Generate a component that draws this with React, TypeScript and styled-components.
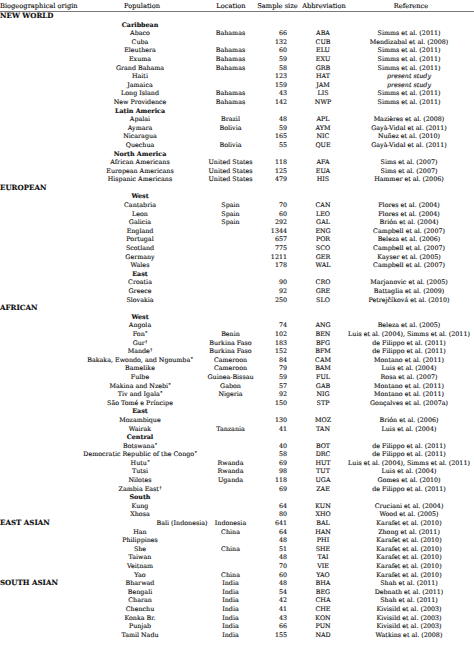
import React from 'react';
import styled, { createGlobalStyle } from 'styled-components';

const Global = createGlobalStyle`
  html, body { margin: 0; padding: 0; background: #fff; }
  body { width: 474px; height: 651px; overflow: hidden; }
`;

const Page = styled.div`
  width: 474px;
  height: 651px;
  overflow: hidden;
  font-family: "DejaVu Serif", "Liberation Serif", serif;
  font-size: 6.35px;
  color: #0d0d0d;
  -webkit-text-stroke: 0.12px #0d0d0d;
`;

const HeaderRow = styled.div`
  display: grid;
  grid-template-columns: 86px 112px 66px 27px 66px 108px;
  height: 11px;
  align-items: center;
  border-bottom: 1.5px solid #7a7a7a;
  font-size: 6.7px;
`;

const Body = styled.div`
  display: flex;
  flex-direction: column;
`;

const Row = styled.div`
  display: grid;
  grid-template-columns: 86px 108px 73px 24px 64px 108px;
  height: 8.6px;
  align-items: center;
  line-height: 8.6px;
`;

type Align = 'left' | 'center' | 'right';

const Cell = styled.div<{ $align?: Align; $bold?: boolean; $italic?: boolean; $shift?: number }>`
  display: flex;
  white-space: nowrap;
  justify-content: ${(p) => (p.$align === 'left' ? 'flex-start' : p.$align === 'right' ? 'flex-end' : 'center')};
  padding-right: ${(p) => (p.$align === 'right' ? '4px' : '0')};
  padding-left: ${(p) => (p.$shift ? `${p.$shift}px` : '0')};
  font-weight: ${(p) => (p.$bold ? 700 : 400)};
  font-style: ${(p) => (p.$italic ? 'italic' : 'normal')};
`;

const Section = styled.div`
  font-weight: 700;
  font-size: 7.1px;
  white-space: nowrap;
`;

const Sup = styled.sup`
  font-size: 4px;
  line-height: 0;
  vertical-align: 2px;
  margin-left: 0.5px;
`;

type Entry = {
  kind: 'entry';
  pop: string;
  mark?: string;
  loc?: string;
  n: string;
  abbr: string;
  ref: string;
  italic?: boolean;
  section?: string;
  shift?: number;
};
type Group = { kind: 'group'; label: string };
type SectionRow = { kind: 'section'; label: string };
type RowData = Entry | Group | SectionRow;

const S = (label: string): SectionRow => ({ kind: 'section', label });
const G = (label: string): Group => ({ kind: 'group', label });
const E = (
  pop: string,
  loc: string,
  n: string,
  abbr: string,
  ref: string,
  extra: Partial<Entry> = {}
): Entry => ({ kind: 'entry', pop, loc, n, abbr, ref, ...extra });

const simms = 'Simms et al. (2011)';
const karafet = 'Karafet et al. (2010)';
const kivisild = 'Kivisild et al. (2003)';
const filippo = 'de Filippo et al. (2011)';
const luisSimms = 'Luis et al. (2004), Simms et al. (2011)';

const rows: RowData[] = [
  S('NEW WORLD'),
  G('Caribbean'),
  E('Abaco', 'Bahamas', '66', 'ABA', simms),
  E('Cuba', '', '132', 'CUB', 'Mendizabal et al. (2008)'),
  E('Eleuthera', 'Bahamas', '60', 'ELU', simms),
  E('Exuma', 'Bahamas', '59', 'EXU', simms),
  E('Grand Bahama', 'Bahamas', '58', 'GRB', simms),
  E('Haiti', '', '123', 'HAT', 'present study', { italic: true }),
  E('Jamaica', '', '159', 'JAM', 'present study', { italic: true }),
  E('Long Island', 'Bahamas', '43', 'LIS', simms),
  E('New Providence', 'Bahamas', '142', 'NWP', simms),
  G('Latin America'),
  E('Apalai', 'Brazil', '48', 'APL', 'Mazières et al. (2008)'),
  E('Aymara', 'Bolivia', '59', 'AYM', 'Gayà-Vidal et al. (2011)'),
  E('Nicaragua', '', '165', 'NIC', 'Nuñez et al. (2010)'),
  E('Quechua', 'Bolivia', '55', 'QUE', 'Gayà-Vidal et al. (2011)'),
  G('North America'),
  E('African Americans', 'United States', '118', 'AFA', 'Sims et al. (2007)'),
  E('European Americans', 'United States', '125', 'EUA', 'Sims et al. (2007)'),
  E('Hispanic Americans', 'United States', '479', 'HIS', 'Hammer et al. (2006)'),
  S('EUROPEAN'),
  G('West'),
  E('Cantabria', 'Spain', '70', 'CAN', 'Flores et al. (2004)'),
  E('Leon', 'Spain', '60', 'LEO', 'Flores et al. (2004)'),
  E('Galicia', 'Spain', '292', 'GAL', 'Brión et al. (2004)'),
  E('England', '', '1344', 'ENG', 'Campbell et al. (2007)'),
  E('Portugal', '', '657', 'POR', 'Beleza et al. (2006)'),
  E('Scotland', '', '775', 'SCO', 'Campbell et al. (2007)'),
  E('Germany', '', '1211', 'GER', 'Kayser et al. (2005)'),
  E('Wales', '', '178', 'WAL', 'Campbell et al. (2007)'),
  G('East'),
  E('Croatia', '', '90', 'CRO', 'Marjanovic et al. (2005)'),
  E('Greece', '', '92', 'GRE', 'Battaglia et al. (2009)'),
  E('Slovakia', '', '250', 'SLO', 'Petrejčíková et al. (2010)'),
  S('AFRICAN'),
  G('West'),
  E('Angola', '', '74', 'ANG', 'Beleza et al. (2005)'),
  E('Fon', 'Benin', '102', 'BEN', luisSimms, { mark: '*' }),
  E('Gur', 'Burkina Faso', '183', 'BFG', filippo, { mark: '†' }),
  E('Mande', 'Burkina Faso', '152', 'BFM', filippo, { mark: '†' }),
  E('Bakaka, Ewondo, and Ngoumba', 'Cameroon', '84', 'CAM', 'Montano et al. (2011)', { mark: '*' }),
  E('Bamelike', 'Cameroon', '79', 'BAM', 'Luis et al. (2004)'),
  E('Fulbe', 'Guinea-Bissau', '59', 'FUL', 'Rosa et al. (2007)'),
  E('Makina and Nzebi', 'Gabon', '57', 'GAB', 'Montano et al. (2011)', { mark: '*' }),
  E('Tiv and Igala', 'Nigeria', '92', 'NIG', 'Montano et al. (2011)', { mark: '*' }),
  E('São Tomé e Príncipe', '', '150', 'STP', 'Gonçalves et al. (2007a)'),
  G('East'),
  E('Mozambique', '', '130', 'MOZ', 'Brión et al. (2006)'),
  E('Wairak', 'Tanzania', '41', 'TAN', 'Luis et al. (2004)'),
  G('Central'),
  E('Botswana', '', '40', 'BOT', filippo, { mark: '*' }),
  E('Democratic Republic of the Congo', '', '58', 'DRC', filippo, { mark: '*' }),
  E('Hutu', 'Rwanda', '69', 'HUT', luisSimms, { mark: '*' }),
  E('Tutsi', 'Rwanda', '98', 'TUT', 'Luis et al. (2004)'),
  E('Nilotes', 'Uganda', '118', 'UGA', 'Gomes et al. (2010)'),
  E('Zambia East', '', '69', 'ZAE', filippo, { mark: '†' }),
  G('South'),
  E('Kung', '', '64', 'KUN', 'Cruciani et al. (2004)'),
  E('Xhosa', '', '80', 'XHO', 'Wood et al. (2005)'),
  E('Bali (Indonesia)', 'Indonesia', '641', 'BAL', karafet, { section: 'EAST ASIAN', shift: 84 }),
  E('Han', 'China', '64', 'HAN', 'Zhong et al. (2011)'),
  E('Philippines', '', '48', 'PHI', karafet),
  E('She', 'China', '51', 'SHE', karafet),
  E('Taiwan', '', '48', 'TAI', karafet),
  E('Veitnam', '', '70', 'VIE', karafet),
  E('Yao', 'China', '60', 'YAO', karafet),
  E('Bharwad', 'India', '48', 'BHA', 'Shah et al. (2011)', { section: 'SOUTH ASIAN' }),
  E('Bengali', 'India', '54', 'BEG', 'Debnath et al. (2011)'),
  E('Charan', 'India', '42', 'CHA', 'Shah et al. (2011)'),
  E('Chenchu', 'India', '41', 'CHE', kivisild),
  E('Konka Br.', 'India', '43', 'KON', kivisild),
  E('Punjab', 'India', '66', 'PUN', kivisild),
  E('Tamil Nadu', 'India', '155', 'NAD', 'Watkins et al. (2008)'),
];

function TableRow({ row }: { row: RowData }) {
  if (row.kind === 'section') {
    return (
      <Row>
        <Cell $align="left">
          <Section>{row.label}</Section>
        </Cell>
      </Row>
    );
  }
  if (row.kind === 'group') {
    return (
      <Row>
        <Cell />
        <Cell $bold>{row.label}</Cell>
      </Row>
    );
  }
  return (
    <Row>
      <Cell $align="left">{row.section ? <Section>{row.section}</Section> : null}</Cell>
      <Cell $shift={row.shift}>
        <span>
          {row.pop}
          {row.mark ? <Sup>{row.mark}</Sup> : null}
        </span>
      </Cell>
      <Cell>{row.loc}</Cell>
      <Cell $align="right">{row.n}</Cell>
      <Cell>{row.abbr}</Cell>
      <Cell $italic={row.italic}>{row.ref}</Cell>
    </Row>
  );
}

export default function App() {
  return (
    <>
      <Global />
      <Page>
        <HeaderRow>
          <Cell $align="left">Biogeographical origin</Cell>
          <Cell>Population</Cell>
          <Cell>Location</Cell>
          <Cell>Sample size</Cell>
          <Cell>Abbreviation</Cell>
          <Cell>Reference</Cell>
        </HeaderRow>
        <Body>
          {rows.map((r, i) => (
            <TableRow key={i} row={r} />
          ))}
        </Body>
      </Page>
    </>
  );
}
